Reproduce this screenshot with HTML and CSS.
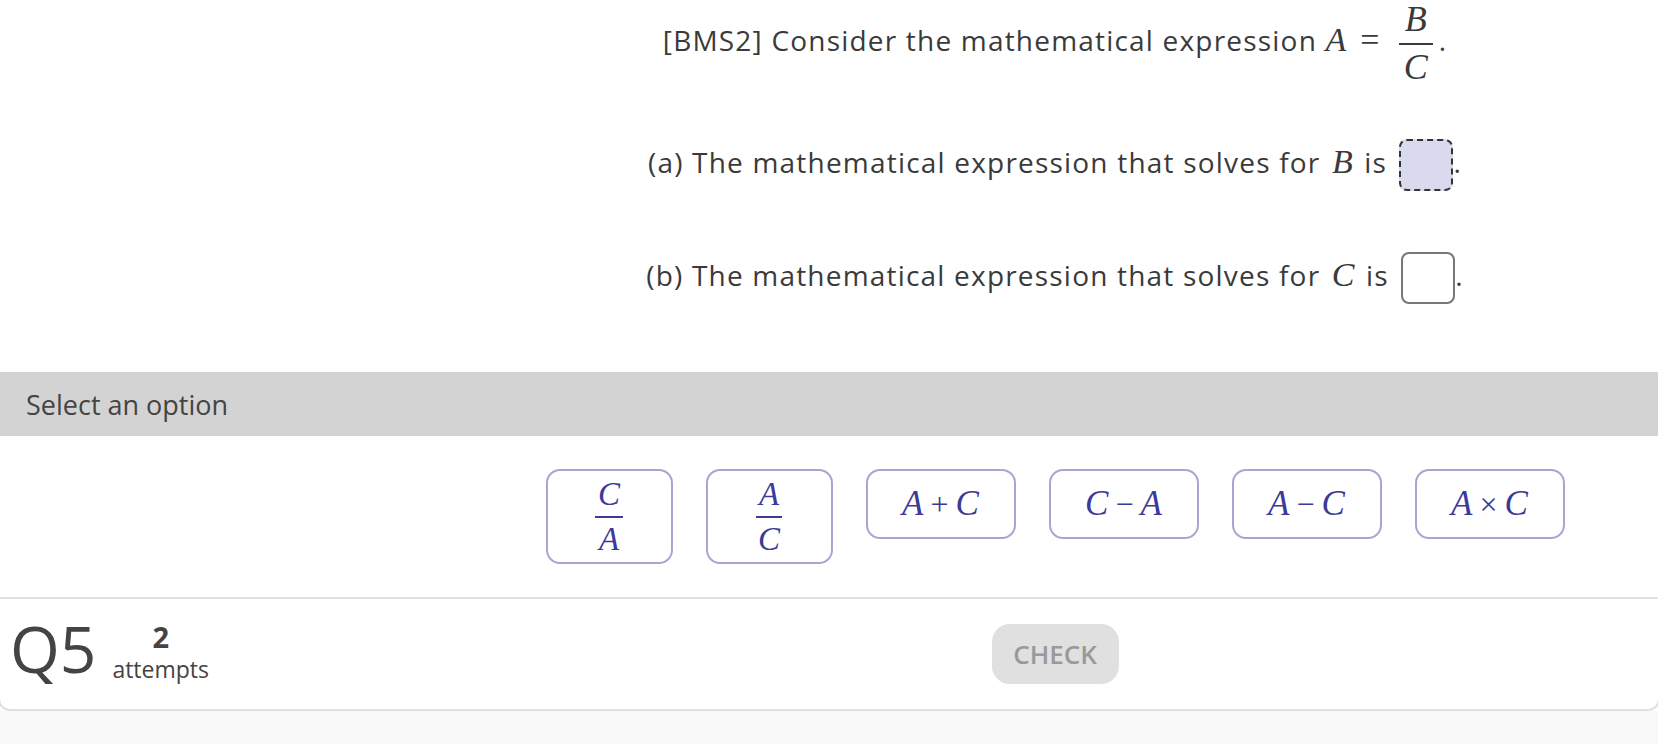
FILE: index.html
```html
<!DOCTYPE html>
<html lang="en">
<head>
  <meta charset="UTF-8">
  <title>Q5</title>
  <meta name="viewport" content="width=device-width, initial-scale=1">
  <link rel="stylesheet" href="styles.css">
</head>
<body>

  <main class="quiz">

    <!-- question text -->
    <section class="prompt">
      <p class="line line-title">[BMS2] Consider the mathematical expression <span class="math"><i>A</i><span class="op">=</span><span class="frac"><i class="num">B</i><i class="den">C</i></span></span>.</p>
      <p class="line line-a">(a) The mathematical expression that solves for <i class="var">B</i> is <span class="slot active"></span>.</p>
      <p class="line line-b">(b) The mathematical expression that solves for <i class="var">C</i> is <span class="slot"></span>.</p>
    </section>

    <div class="band">Select an option</div>

    <!-- answer choices -->
    <section class="options">
      <button class="opt opt-frac"><span class="frac"><i class="num">C</i><i class="den">A</i></span></button>
      <button class="opt opt-frac"><span class="frac"><i class="num">A</i><i class="den">C</i></span></button>
      <button class="opt"><i>A</i><span class="sign">+</span><i>C</i></button>
      <button class="opt"><i>C</i><span class="sign">&minus;</span><i>A</i></button>
      <button class="opt"><i>A</i><span class="sign">&minus;</span><i>C</i></button>
      <button class="opt"><i>A</i><span class="sign">&times;</span><i>C</i></button>
    </section>

    <footer class="footer">
      <div class="qnum">
        <span class="qlabel">Q5</span>
        <div class="attempts">
          <b>2</b>
          <span>attempts</span>
        </div>
      </div>
      <div class="actions">
        <button class="check" disabled>CHECK</button>
      </div>
    </footer>

  </main>

</body>
</html>
```

FILE: styles.css
```css
/* base */
body {
  margin: 0;
  background: #f9f9f9;
  font-family: "Open Sans", "Liberation Sans", sans-serif;
  color: #3a3a3a;
}

.quiz {
  background: #fff;
}

i {
  font-family: "Liberation Serif", "DejaVu Serif", serif;
  font-style: italic;
  letter-spacing: 0;
}

/* question */
.prompt {
  padding: 0 0 0 452px;
  text-align: center;
}

.line {
  margin: 0;
  font-size: 28px;
  letter-spacing: 1.2px;
  line-height: 40px;
}

.line-a { margin-top: 52px; }
.line-b { margin-top: 61px; }

.var {
  font-size: 34px;
  padding: 0 3px;
}

.math i {
  font-size: 34px;
}

.op {
  font-family: "Liberation Serif", serif;
  font-size: 34px;
  margin: 0 18px 0 14px;
}

.frac {
  display: inline-flex;
  flex-direction: column;
  align-items: center;
  vertical-align: middle;
  line-height: 1.1;
}

.math .frac {
  margin-right: 6px;
}

.math .frac i {
  font-size: 36px;
}

.frac .num {
  border-bottom: 2px solid currentColor;
  padding: 0 6px 3px;
}

.frac .den {
  padding-top: 3px;
}

.slot {
  display: inline-block;
  width: 50px;
  height: 48px;
  border: 2px solid #777;
  border-radius: 8px;
  vertical-align: middle;
  margin-left: 4px;
}

.slot.active {
  background: #dadaee;
  border: 2px dashed #333;
}

/* select bar */
.band {
  margin-top: 68px;
  height: 64px;
  display: flex;
  align-items: center;
  padding-left: 26px;
  background: #d3d3d3;
  font-size: 27px;
  color: #444;
}

/* options */
.options {
  display: flex;
  align-items: flex-start;
  justify-content: center;
  gap: 33px;
  padding: 33px 0 33px 452px;
}

.opt {
  width: 150px;
  height: 70px;
  background: #fff;
  border: 2px solid #a8a6d0;
  border-radius: 14px;
  color: #3b3a98;
  display: flex;
  align-items: center;
  justify-content: center;
  cursor: pointer;
}

.opt i {
  font-size: 35px;
}

.opt .sign {
  font-family: "Liberation Serif", serif;
  font-size: 32px;
  margin: 0 7px;
}

.opt-frac {
  width: 127px;
  height: 95px;
}

.opt-frac .frac {
  line-height: 1.05;
}

.opt-frac .num {
  padding: 0 3px 4px;
}

.opt-frac .den {
  padding-top: 4px;
}

.opt-frac i {
  font-size: 33px;
}

/* footer */
.footer {
  display: grid;
  grid-template-columns: 452px 1fr;
  align-items: center;
  height: 110px;
  margin: 0 -2px;
  border: 2px solid #e0e0e0;
  border-radius: 0 0 12px 12px;
}

.qnum {
  display: flex;
  align-items: center;
  padding: 0 0 10px 10px;
  gap: 16px;
}

.qlabel {
  font-size: 64px;
  color: #444;
  line-height: 1;
}

.attempts {
  display: flex;
  flex-direction: column;
  align-items: center;
  color: #444;
  padding-top: 6px;
}

.attempts b {
  font-size: 29px;
  line-height: 30px;
  margin-bottom: 4px;
}

.attempts span {
  font-size: 23px;
  line-height: 26px;
}

.actions {
  display: flex;
  justify-content: center;
}

.check {
  width: 127px;
  height: 60px;
  border: none;
  border-radius: 18px;
  background: #e0e0e0;
  color: #999;
  font-family: "Open Sans", sans-serif;
  font-size: 26px;
  font-weight: 600;
}
```
